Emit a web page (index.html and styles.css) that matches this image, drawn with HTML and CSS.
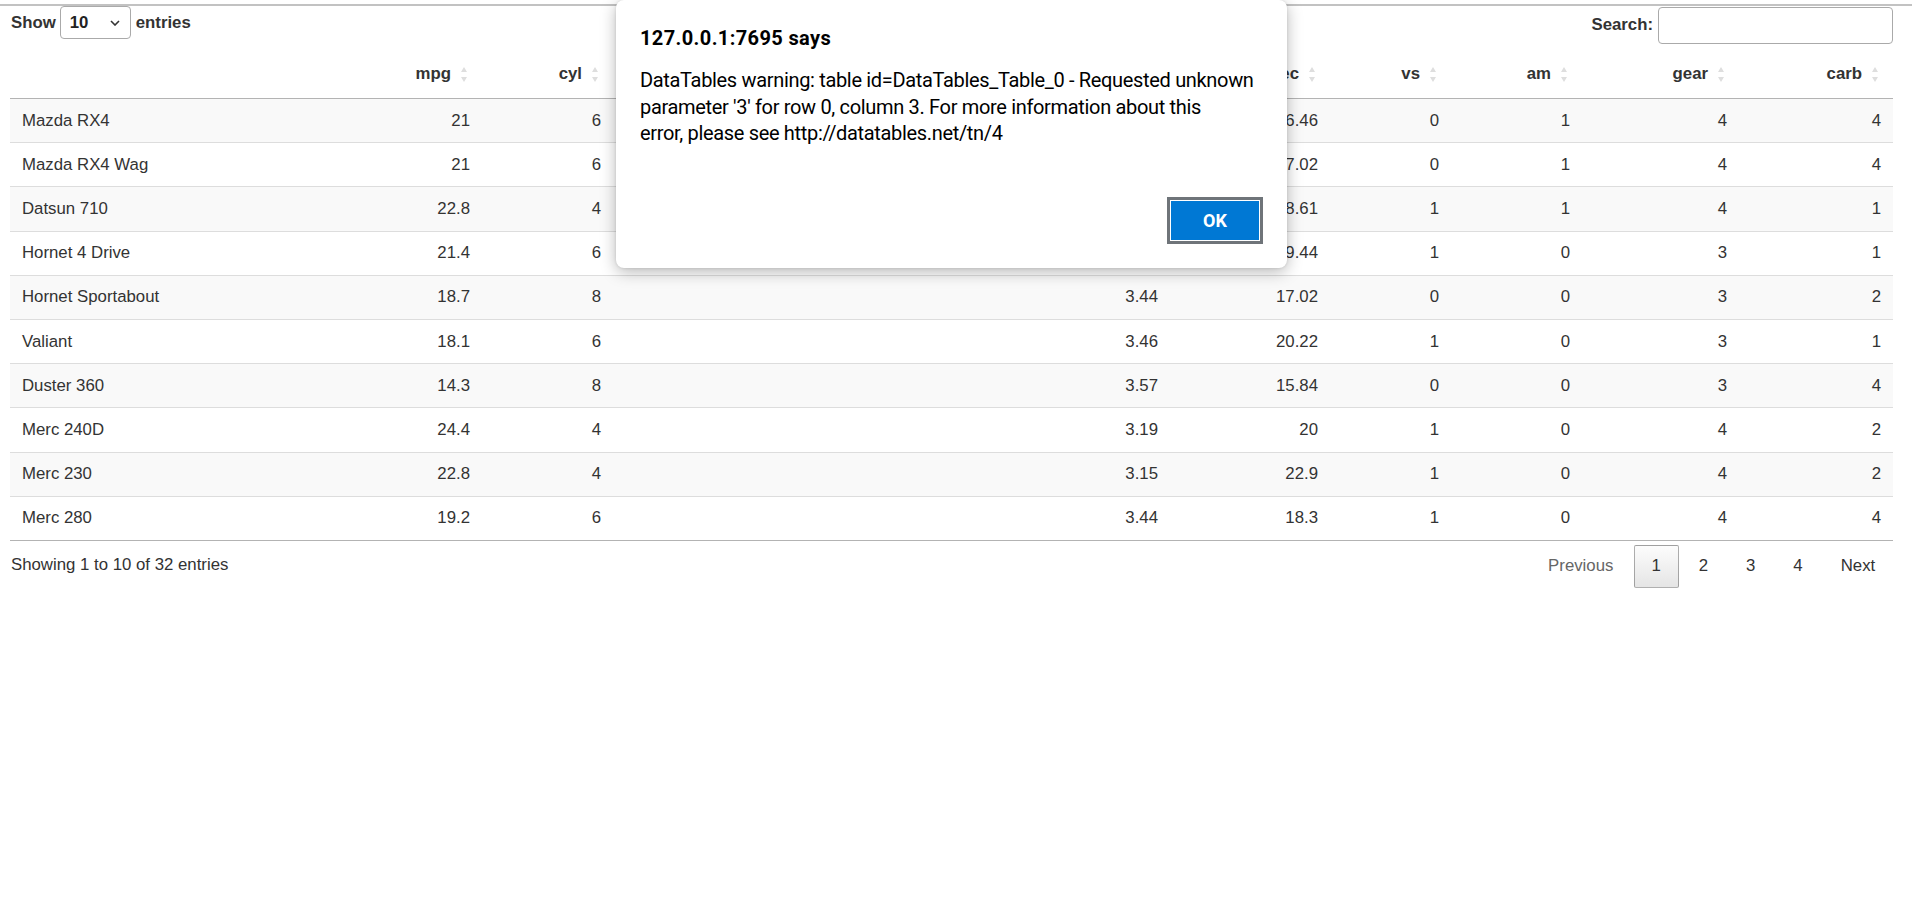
FILE: index.html
```html
<!DOCTYPE html>
<html lang="en">
<head>
<meta charset="utf-8">
<title>DataTables</title>
<link rel="stylesheet" href="styles.css">
</head>
<body>
<div class="topline"></div>
<div class="wrapper">
  <div class="controls">
    <div class="length">
      <span>Show</span>
      <span class="select"><span>10</span><svg class="chev" width="10" height="6" viewBox="0 0 10 6"><path d="M1 1 L5 5 L9 1" fill="none" stroke="#333" stroke-width="1.6"/></svg></span>
      <span>entries</span>
    </div>
    <div class="filter">
      <span>Search:</span>
      <span class="input"></span>
    </div>
  </div>

  <table class="dt">
    <colgroup>
      <col class="w-name"><col class="w-mpg"><col class="w-cyl"><col class="w-disp"><col class="w-hp"><col class="w-drat"><col class="w-wt"><col class="w-qsec"><col class="w-vs"><col class="w-am"><col class="w-gear"><col class="w-carb">
    </colgroup>
    <thead>
      <tr>
        <th class="left"><div class="h">&nbsp;</div></th>
        <th><div class="h"><span>mpg</span><svg class="sort" width="6" height="15" viewBox="0 0 6 15"><polygon points="0,5 3,0 6,5"/><polygon points="0,10 6,10 3,15"/></svg></div></th>
        <th><div class="h"><span>cyl</span><svg class="sort" width="6" height="15" viewBox="0 0 6 15"><polygon points="0,5 3,0 6,5"/><polygon points="0,10 6,10 3,15"/></svg></div></th>
        <th><div class="h"><span>disp</span><svg class="sort" width="6" height="15" viewBox="0 0 6 15"><polygon points="0,5 3,0 6,5"/><polygon points="0,10 6,10 3,15"/></svg></div></th>
        <th><div class="h"><span>hp</span><svg class="sort" width="6" height="15" viewBox="0 0 6 15"><polygon points="0,5 3,0 6,5"/><polygon points="0,10 6,10 3,15"/></svg></div></th>
        <th><div class="h"><span>drat</span><svg class="sort" width="6" height="15" viewBox="0 0 6 15"><polygon points="0,5 3,0 6,5"/><polygon points="0,10 6,10 3,15"/></svg></div></th>
        <th><div class="h"><span>wt</span><svg class="sort" width="6" height="15" viewBox="0 0 6 15"><polygon points="0,5 3,0 6,5"/><polygon points="0,10 6,10 3,15"/></svg></div></th>
        <th><div class="h"><span>qsec</span><svg class="sort" width="6" height="15" viewBox="0 0 6 15"><polygon points="0,5 3,0 6,5"/><polygon points="0,10 6,10 3,15"/></svg></div></th>
        <th><div class="h"><span>vs</span><svg class="sort" width="6" height="15" viewBox="0 0 6 15"><polygon points="0,5 3,0 6,5"/><polygon points="0,10 6,10 3,15"/></svg></div></th>
        <th><div class="h"><span>am</span><svg class="sort" width="6" height="15" viewBox="0 0 6 15"><polygon points="0,5 3,0 6,5"/><polygon points="0,10 6,10 3,15"/></svg></div></th>
        <th><div class="h"><span>gear</span><svg class="sort" width="6" height="15" viewBox="0 0 6 15"><polygon points="0,5 3,0 6,5"/><polygon points="0,10 6,10 3,15"/></svg></div></th>
        <th><div class="h"><span>carb</span><svg class="sort" width="6" height="15" viewBox="0 0 6 15"><polygon points="0,5 3,0 6,5"/><polygon points="0,10 6,10 3,15"/></svg></div></th>
      </tr>
    </thead>
    <tbody>
      <tr><td class="left">Mazda RX4</td><td>21</td><td>6</td><td></td><td></td><td></td><td>2.62</td><td>16.46</td><td>0</td><td>1</td><td>4</td><td>4</td></tr>
      <tr><td class="left">Mazda RX4 Wag</td><td>21</td><td>6</td><td></td><td></td><td></td><td>2.875</td><td>17.02</td><td>0</td><td>1</td><td>4</td><td>4</td></tr>
      <tr><td class="left">Datsun 710</td><td>22.8</td><td>4</td><td></td><td></td><td></td><td>2.32</td><td>18.61</td><td>1</td><td>1</td><td>4</td><td>1</td></tr>
      <tr><td class="left">Hornet 4 Drive</td><td>21.4</td><td>6</td><td></td><td></td><td></td><td>3.215</td><td>19.44</td><td>1</td><td>0</td><td>3</td><td>1</td></tr>
      <tr><td class="left">Hornet Sportabout</td><td>18.7</td><td>8</td><td></td><td></td><td></td><td>3.44</td><td>17.02</td><td>0</td><td>0</td><td>3</td><td>2</td></tr>
      <tr><td class="left">Valiant</td><td>18.1</td><td>6</td><td></td><td></td><td></td><td>3.46</td><td>20.22</td><td>1</td><td>0</td><td>3</td><td>1</td></tr>
      <tr><td class="left">Duster 360</td><td>14.3</td><td>8</td><td></td><td></td><td></td><td>3.57</td><td>15.84</td><td>0</td><td>0</td><td>3</td><td>4</td></tr>
      <tr><td class="left">Merc 240D</td><td>24.4</td><td>4</td><td></td><td></td><td></td><td>3.19</td><td>20</td><td>1</td><td>0</td><td>4</td><td>2</td></tr>
      <tr><td class="left">Merc 230</td><td>22.8</td><td>4</td><td></td><td></td><td></td><td>3.15</td><td>22.9</td><td>1</td><td>0</td><td>4</td><td>2</td></tr>
      <tr><td class="left">Merc 280</td><td>19.2</td><td>6</td><td></td><td></td><td></td><td>3.44</td><td>18.3</td><td>1</td><td>0</td><td>4</td><td>4</td></tr>
    </tbody>
  </table>

  <div class="bottom">
    <div class="info">Showing 1 to 10 of 32 entries</div>
    <div class="paginate">
      <span class="pbtn disabled">Previous</span>
      <span class="pbtn current">1</span>
      <span class="pbtn">2</span>
      <span class="pbtn">3</span>
      <span class="pbtn">4</span>
      <span class="pbtn">Next</span>
    </div>
  </div>
</div>

<div class="alert">
  <div class="alert-title">127.0.0.1:7695 says</div>
  <div class="alert-msg">DataTables warning: table id=DataTables_Table_0 - Requested unknown<br>parameter '3' for row 0, column 3. For more information about this<br>error, please see http://datatables.net/tn/4</div>
  <div class="alert-actions"><button class="ok">OK</button></div>
</div>
</body>
</html>
```

FILE: styles.css
```css
html, body {
  margin: 0;
  padding: 0;
  background: #fff;
}

body {
  font-family: "Liberation Sans", Arial, Helvetica, sans-serif;
  font-size: 16.8px;
  color: #333;
  position: relative;
  min-height: 906px;
}

.topline {
  height: 2px;
  margin-top: 4px;
  background: #c2c2c2;
}

.wrapper {
  margin: 0 19px 0 10px;
}

/* top controls */
.controls {
  display: flex;
  justify-content: space-between;
  align-items: flex-start;
  height: 44px;
}

.length {
  display: flex;
  align-items: center;
  gap: 4px;
  font-weight: bold;
  height: 33px;
  padding-left: 1px;
}

.length > span:last-child {
  margin-left: 1px;
}

.select {
  box-sizing: border-box;
  width: 71px;
  height: 33px;
  border: 1px solid #aaa;
  border-radius: 4px;
  display: flex;
  align-items: center;
  justify-content: space-between;
  padding: 0 10px 0 9px;
  color: #222;
}

.chev {
  display: block;
}

.filter {
  display: flex;
  align-items: center;
  gap: 5px;
  font-weight: bold;
  margin-top: 1px;
}

.input {
  box-sizing: border-box;
  width: 235px;
  height: 36.5px;
  border: 1px solid #aaa;
  border-radius: 4px;
  background: #fff;
}

/* table */
.dt {
  width: 1883px;
  table-layout: fixed;
  border-collapse: separate;
  border-spacing: 0;
  border-bottom: 1px solid #b3b3b3;
}

.w-name { width: 325px; }
.w-mpg { width: 147px; }
.w-cyl { width: 131px; }
.w-disp { width: 152px; }
.w-hp { width: 128px; }
.w-drat { width: 149px; }
.w-wt { width: 128px; }
.w-qsec { width: 160px; }
.w-vs { width: 121px; }
.w-am { width: 131px; }
.w-gear { width: 157px; }
.w-carb { width: 154px; }

.dt th {
  font-weight: bold;
  padding: 12px 0 12px 12px;
  line-height: 24px;
  border-bottom: 1px solid #b3b3b3;
  text-align: right;
  color: #333;
}

.dt th .h {
  display: flex;
  justify-content: flex-end;
  align-items: center;
  gap: 9.5px;
  padding-right: 15.5px;
}

.dt th.left .h {
  justify-content: flex-start;
}

.sort {
  display: block;
  fill: #dedede;
  flex: none;
}

.dt td {
  padding: 9.6px 12px;
  line-height: 24px;
  border-top: 1px solid #dddddd;
  text-align: right;
  white-space: nowrap;
  overflow: hidden;
}

.dt tbody tr:first-child td {
  border-top: none;
}

.dt tbody tr:nth-child(odd) td {
  background: #f9f9f9;
}

.dt .left {
  text-align: left;
}

/* bottom */
.bottom {
  display: flex;
  justify-content: space-between;
  align-items: flex-start;
}

.info {
  padding-top: 12.3px;
  line-height: 24px;
  padding-left: 1px;
}

.paginate {
  display: flex;
  padding-top: 4px;
}

.pbtn {
  display: block;
  padding: 8.4px 16.8px;
  line-height: 24px;
  border: 1px solid transparent;
  border-radius: 2px;
  margin-left: 2.4px;
  color: #333;
}

.pbtn.disabled {
  color: #666;
}

.pbtn.current {
  border-color: rgba(0, 0, 0, 0.3);
  background: linear-gradient(to bottom, rgba(230, 230, 230, 0.1) 0%, rgba(0, 0, 0, 0.1) 100%);
}

/* browser alert dialog (overlay) */
.alert {
  position: absolute;
  left: 616px;
  top: 0;
  width: 671px;
  height: 268px;
  box-sizing: border-box;
  background: #fff;
  border-radius: 8px;
  box-shadow: 0 4px 16px rgba(0, 0, 0, 0.28), 0 0 3px rgba(0, 0, 0, 0.12);
  padding: 25px 27px 27px 24px;
  display: flex;
  flex-direction: column;
  font-family: Roboto, "Noto Sans", sans-serif;
  color: #000;
}

.alert-title {
  font-size: 20px;
  font-weight: bold;
  line-height: 26.67px;
  letter-spacing: 0.38px;
}

.alert-msg {
  margin-top: 15.3px;
  font-size: 20px;
  line-height: 26.67px;
  letter-spacing: -0.33px;
  white-space: nowrap;
}

.alert-actions {
  margin-top: auto;
  display: flex;
  justify-content: flex-end;
}

.ok {
  box-sizing: border-box;
  width: 90px;
  height: 41px;
  background: #0078d4;
  border: 1px solid #fff;
  box-shadow: 0 0 0 3px #6f7479;
  color: #fff;
  font-family: Roboto, "Noto Sans", sans-serif;
  font-weight: bold;
  font-size: 18px;
  padding: 0;
  border-radius: 0;
}
```
